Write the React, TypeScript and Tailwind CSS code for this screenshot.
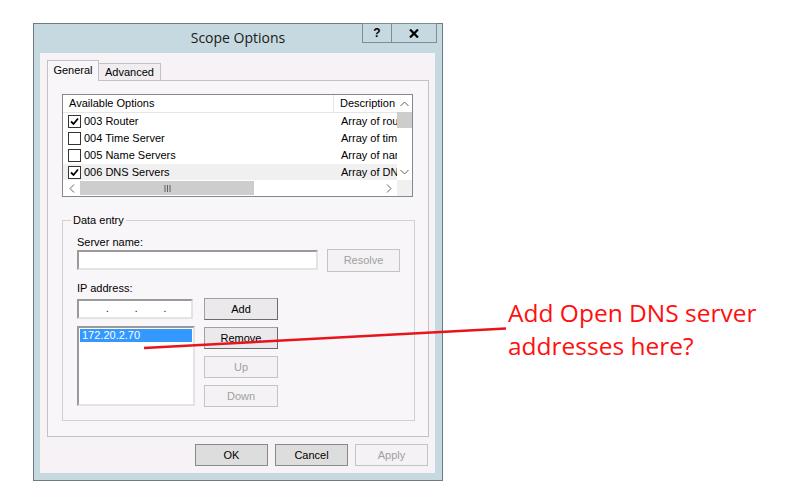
import React from "react";

function Btn({
  label,
  disabled,
  cls,
}: {
  label: string;
  disabled?: boolean;
  cls: string;
}) {
  return (
    <div
      className={
        "flex items-center justify-center border box-border " +
        cls +
        (disabled
          ? " border-[#c4c4c4] bg-[#f4f2f4] text-[#a0a0a0]"
          : " border-[#a0a0a0] border-r-[#6b6b6b] border-b-[#6b6b6b] bg-[#ebe9eb] text-black")
      }
    >
      {label}
    </div>
  );
}

function Check({ on }: { on: boolean }) {
  return (
    <div className="w-[13px] h-[13px] border border-[#333] bg-white flex items-center justify-center shrink-0">
      {on && (
        <svg width="9" height="9" viewBox="0 0 9 9">
          <path d="M1 4.5 L3.5 7 L8 1.5" fill="none" stroke="#000" strokeWidth="1.8" />
        </svg>
      )}
    </div>
  );
}

const rows = [
  { on: true, name: "003 Router", desc: "Array of router addresses", sel: false },
  { on: false, name: "004 Time Server", desc: "Array of time server addresses", sel: false },
  { on: false, name: "005 Name Servers", desc: "Array of name servers", sel: false },
  { on: true, name: "006 DNS Servers", desc: "Array of DNS servers", sel: true },
];

function ListView() {
  return (
    <div className="w-[351px] h-[103px] border border-[#828790] bg-white flex flex-col">
      <div className="flex flex-1 min-h-0">
        <div className="flex-1 flex flex-col overflow-hidden">
          <div className="h-[18px] flex shrink-0 border-b border-[#e5e5e5]">
            <div className="w-[271px] pl-[6px] flex items-center border-r border-[#e5e5e5] whitespace-nowrap">
              Available Options
            </div>
            <div className="flex-1 pl-[6px] flex items-center whitespace-nowrap overflow-hidden">
              Description
            </div>
          </div>
          {rows.map((r) => (
            <div
              key={r.name}
              className={"h-[17px] flex items-center shrink-0 " + (r.sel ? "bg-[#f0f0f0]" : "")}
            >
              <div className="w-[271px] flex items-center pl-[5px] gap-[3px] whitespace-nowrap">
                <Check on={r.on} />
                <span>{r.name}</span>
              </div>
              <div className="flex-1 pl-[7px] whitespace-nowrap overflow-hidden">{r.desc}</div>
            </div>
          ))}
        </div>
        <div className="w-[15px] flex flex-col bg-white">
          <div className="h-[17px] flex items-center justify-center">
            <svg width="9" height="6" viewBox="0 0 9 6">
              <path d="M0.5 5 L4.5 1 L8.5 5" fill="none" stroke="#606060" strokeWidth="1" />
            </svg>
          </div>
          <div className="h-[16px] bg-[#cdcdcd]" />
          <div className="flex-1" />
          <div className="h-[17px] flex items-center justify-center">
            <svg width="9" height="6" viewBox="0 0 9 6">
              <path d="M0.5 1 L4.5 5 L8.5 1" fill="none" stroke="#606060" strokeWidth="1" />
            </svg>
          </div>
        </div>
      </div>
      <div className="h-[16px] flex shrink-0">
        <div className="flex-1 flex bg-white">
          <div className="w-[17px] flex items-center justify-center">
            <svg width="6" height="9" viewBox="0 0 6 9">
              <path d="M5 0.5 L1 4.5 L5 8.5" fill="none" stroke="#606060" strokeWidth="1" />
            </svg>
          </div>
          <div className="w-[174px] bg-[#cdcdcd] my-[1px] flex items-center justify-center">
            <svg width="7" height="7" viewBox="0 0 7 7">
              <path d="M1 0 V7 M3.5 0 V7 M6 0 V7" stroke="#606060" strokeWidth="1" />
            </svg>
          </div>
          <div className="flex-1" />
          <div className="w-[17px] flex items-center justify-center">
            <svg width="6" height="9" viewBox="0 0 6 9">
              <path d="M1 0.5 L5 4.5 L1 8.5" fill="none" stroke="#606060" strokeWidth="1" />
            </svg>
          </div>
        </div>
        <div className="w-[15px] bg-[#f0f0f0]" />
      </div>
    </div>
  );
}

const sunken =
  "border-2 border-t-[#9a9a9a] border-l-[#9a9a9a] border-r-[#e3e3e3] border-b-[#e3e3e3] bg-white";

function DataEntry() {
  return (
    <fieldset className="w-[352px] h-[207px] border border-[#d0d0d0] ml-[14px] mt-[17px] px-[14px]">
      <legend className="ml-[-6px] px-[2px] leading-[13px]">Data entry</legend>
      <div className="mt-[9px] leading-[13px]">Server name:</div>
      <div className="flex items-start mt-[1px] gap-[9px]">
        <div className={"w-[241px] h-[20px] " + sunken} />
        <Btn label="Resolve" disabled cls="w-[73px] h-[23px] mt-[-1px]" />
      </div>
      <div className="mt-[10px] leading-[13px]">IP address:</div>
      <div className="flex items-start mt-[3px] gap-[9px]">
        <div className="flex flex-col gap-[7px] mt-[1px]">
          <div className={"w-[116px] h-[20px] flex items-center " + sunken}>
            <div className="flex pl-[27px] gap-[26px] text-[10px] leading-none">
              <span>.</span>
              <span>.</span>
              <span>.</span>
            </div>
          </div>
          <div className={"w-[118px] h-[80px] p-[1px] " + sunken}>
            <div className="h-[13px] bg-[#3399ff] text-white leading-[13px] pl-[2px]">172.20.2.70</div>
          </div>
        </div>
        <div className="flex flex-col gap-[7px]">
          <Btn label="Add" cls="w-[74px] h-[22px]" />
          <Btn label="Remove" cls="w-[74px] h-[22px]" />
          <Btn label="Up" disabled cls="w-[74px] h-[22px]" />
          <Btn label="Down" disabled cls="w-[74px] h-[22px]" />
        </div>
      </div>
    </fieldset>
  );
}

function Dialog() {
  return (
    <div className="ml-[33px] mt-[23px] w-[410px] h-[458px] border border-[#6d7b82] bg-[#c6d9e0] flex flex-col shrink-0 font-['Liberation_Sans',Arial,sans-serif] text-[11px] text-black">
      <div className="h-[29px] grid grid-cols-[1fr_auto_1fr] shrink-0">
        <div />
        <div className="self-center font-['Open_Sans',sans-serif] text-[14px] leading-none text-[#1a1a1a] pb-[1px]">
          Scope Options
        </div>
        <div className="flex justify-end items-start pr-[5px] mt-[-1px]">
          <div className="w-[30px] h-[20px] border border-[#7f8c92] flex items-center justify-center font-bold text-[12px]">
            ?
          </div>
          <div className="w-[45px] h-[20px] border border-l-0 border-[#7f8c92] flex items-center justify-center">
            <svg width="10" height="9" viewBox="0 0 10 9">
              <path d="M1 0.5 L9 8.5 M9 0.5 L1 8.5" stroke="#000" strokeWidth="2.2" />
            </svg>
          </div>
        </div>
      </div>
      <div className="ml-[6px] mr-[7px] mb-[7px] flex-1 bg-[#f6f2f6] flex flex-col">
        <div className="h-[20px] mt-[7px] flex items-end pl-[7px] shrink-0">
          <div className="relative z-10 w-[52px] h-[21px] mb-[-1px] border border-b-0 border-[#c2c2c2] bg-[#f9f6f9] flex items-center justify-center pb-[2px]">
            General
          </div>
          <div className="w-[62px] h-[17px] border border-l-0 border-b-0 border-[#c2c2c2] bg-[#f1edf1] flex items-center justify-center">
            Advanced
          </div>
        </div>
        <div className="ml-[7px] mr-[6px] h-[357px] border border-[#c2c2c2] bg-[#f9f6f9] pt-[13px] shrink-0">
          <div className="ml-[14px]">
            <ListView />
          </div>
          <DataEntry />
        </div>
        <div className="flex justify-end gap-[7px] pr-[7px] mt-[7px]">
          <div className="w-[73px] h-[22px] border border-[#8a8a8a] bg-[#dddddd] flex items-center justify-center">OK</div>
          <div className="w-[73px] h-[22px] border border-[#8a8a8a] bg-[#dddddd] flex items-center justify-center">Cancel</div>
          <Btn label="Apply" disabled cls="w-[73px] h-[22px]" />
        </div>
      </div>
    </div>
  );
}

export default function App() {
  return (
    <div className="relative w-[800px] h-[504px] bg-white overflow-hidden">
      <div className="flex items-start">
        <Dialog />
        <div className="ml-[65px] mt-[296px] font-['Open_Sans',sans-serif] text-[24.5px] leading-[33px] text-[#ff1010] whitespace-nowrap">
          <div>Add Open DNS server</div>
          <div>addresses here?</div>
        </div>
      </div>
      <svg className="absolute inset-0 pointer-events-none" width="800" height="504">
        <line x1="144" y1="348" x2="506" y2="328.5" stroke="#e8141b" strokeWidth="2.4" />
      </svg>
    </div>
  );
}
